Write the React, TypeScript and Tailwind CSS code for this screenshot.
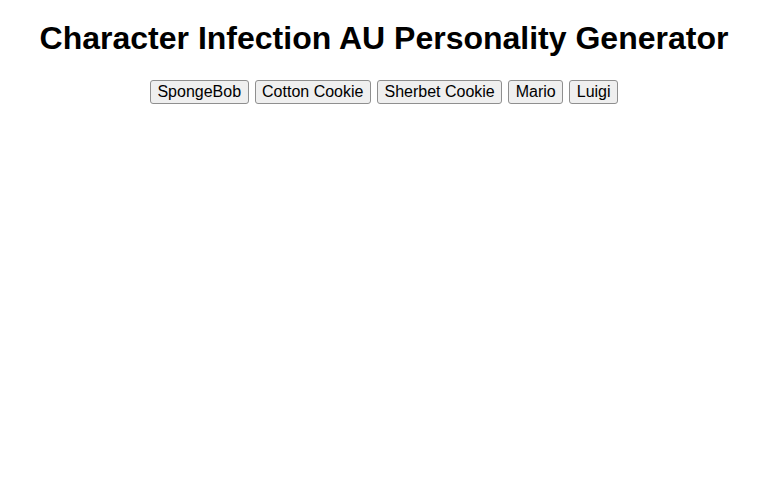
const characters = ["SpongeBob", "Cotton Cookie", "Sherbet Cookie", "Mario", "Luigi"];

export default function App() {
  return (
    <main className="min-h-screen bg-white text-center font-['Liberation_Sans',Arial,sans-serif] text-black">
      <h1 className="mt-[20px] mb-[23px] text-[32px] font-bold leading-[37px]">
        Character Infection AU Personality Generator
      </h1>
      <div className="flex justify-center gap-[6px]">
        {characters.map((name) => (
          <button
            key={name}
            className="rounded-[3px] border border-[#8f8f8f] bg-[#efefef] px-[6.5px] py-[2px] text-base leading-[18px] text-black"
          >
            {name}
          </button>
        ))}
      </div>
    </main>
  );
}
